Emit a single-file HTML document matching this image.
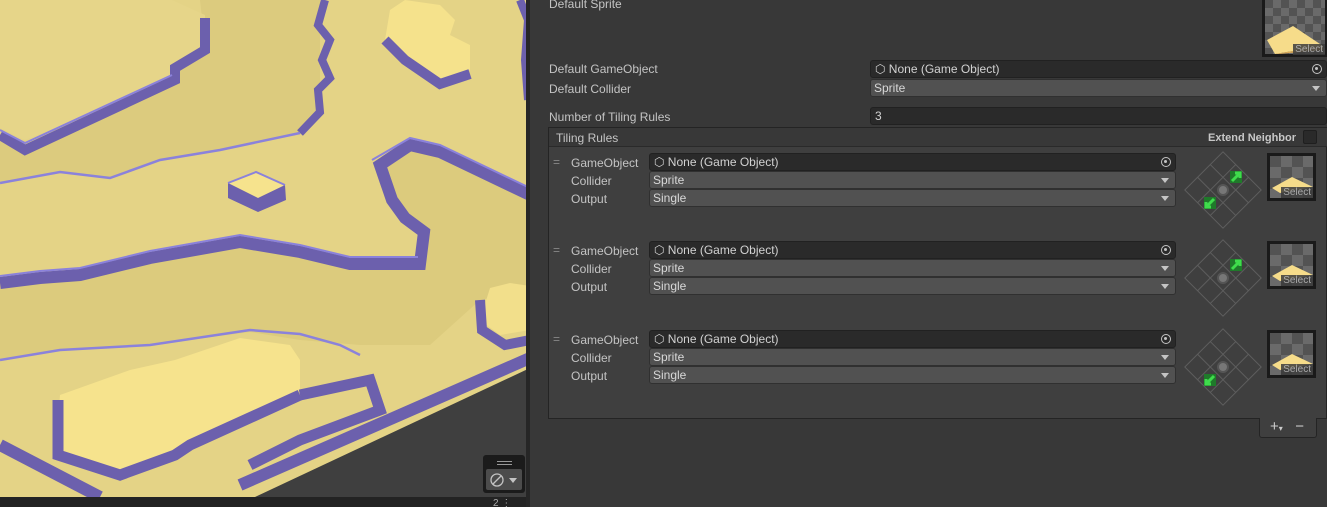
<!DOCTYPE html>
<html><head><meta charset="utf-8"><style>
*{box-sizing:border-box;margin:0;padding:0}
body{width:1327px;height:507px;overflow:hidden;background:#383838;font-family:"Liberation Sans",sans-serif;font-size:12px;color:#c4c4c4;position:relative}
.a{position:absolute}
.lbl{position:absolute;line-height:16px;white-space:nowrap}
.fld{position:absolute;background:#2a2a2a;border:1px solid #212121;border-radius:3px;height:18px;line-height:16px;padding-left:4px;color:#d2d2d2}
.dd{position:absolute;background:#515151;border:1px solid #303030;border-radius:3px;height:18px;line-height:16px;padding-left:3px;color:#d8d8d8}
.dd:after{content:"";position:absolute;right:6px;top:6px;border-left:4px solid transparent;border-right:4px solid transparent;border-top:5px solid #c4c4c4}
.tgt{position:absolute;right:4px;top:3px;width:10px;height:10px;border:1.3px solid #c4c4c4;border-radius:50%}
.tgt:after{content:"";position:absolute;left:2px;top:2px;width:3px;height:3px;background:#c4c4c4;border-radius:50%}
.thumb{position:absolute;background:#1a1a1a;}
.chk{position:absolute;background:
 conic-gradient(#6a6a6a 25%,#535353 0 50%,#6a6a6a 0 75%,#535353 0) 0 0/16px 16px}
.sel{position:absolute;right:0;bottom:0;background:rgba(60,60,60,.85);color:#aaa;font-size:10px;line-height:11px;padding:0 2px}
</style></head><body>
<svg class="a" style="left:0;top:0" width="530" height="507" viewBox="0 0 530 507">
<rect width="530" height="507" fill="#e4d386"/>
<polygon points="0,183 60,172 110,178 160,160 220,150 300,133 320,110 320,0 200,0 205,45 175,62 175,80 25,150 0,140" fill="#dccb7e"/>
<polygon points="0,280 80,270 150,255 240,240 300,250 350,262 420,262 425,230 405,215 390,200 380,160 410,140 440,148 530,190 530,290 480,300 430,345 360,345 300,340 250,332 150,345 60,350 0,360" fill="#dccb7d"/>
<polygon points="0,0 172,0 205,15 205,45 175,62 175,80 25,140 0,128" fill="#e6d589"/>
<polyline points="0,135 25,150 175,80 175,68 205,50 205,18" fill="none" stroke="#6c60ad" stroke-width="10"/>
<polyline points="0,130 25,143 172,75" fill="none" stroke="#8b82db" stroke-width="2"/>
<polyline points="300,133 320,112 318,90 330,78 322,60 330,40 318,25 325,0" fill="none" stroke="#6c60ad" stroke-width="8"/>
<polyline points="0,183 60,172 110,178 160,160 220,150 300,133" fill="none" stroke="#8b82db" stroke-width="2.5"/>
<polygon points="390,10 405,0 440,5 455,20 450,35 470,45 470,70 440,80 405,55 385,40" fill="#f5e28c"/>
<polyline points="385,40 405,60 440,84 470,74" fill="none" stroke="#6c60ad" stroke-width="10"/>
<polyline points="520,0 528,20 525,60 528,100" fill="none" stroke="#6c60ad" stroke-width="8"/>
<polygon points="228,183 256,172 285,185 258,198" fill="#f6e38d"/>
<polygon points="228,183 258,198 285,185 286,200 258,212 228,198" fill="#6c60ad"/>
<polyline points="228,183 256,172 285,185" fill="none" stroke="#8b82db" stroke-width="2"/>
<polyline points="0,283 40,278 80,275 150,258 240,242 300,252 350,264 420,264 424,232 405,218 392,200 380,165 410,145 440,152 530,195" fill="none" stroke="#6c60ad" stroke-width="12"/>
<polyline points="0,276 40,271 80,268 150,251 240,235 300,245 350,257 418,257" fill="none" stroke="#8b82db" stroke-width="2"/>
<polyline points="372,160 410,138 440,145 530,188" fill="none" stroke="#8b82db" stroke-width="2"/>
<polygon points="490,288 510,283 530,286 530,330 500,335 480,320" fill="#f2df8b"/>
<polyline points="480,300 482,330 505,345 530,340" fill="none" stroke="#6c60ad" stroke-width="10"/>
<polyline points="0,360 60,350 150,345 250,330 300,334 340,345 360,355" fill="none" stroke="#8b82db" stroke-width="2.5"/>
<polygon points="60,395 130,370 175,360 240,338 290,345 300,360 300,390 190,440 175,450 120,470 60,455 58,420" fill="#f6e38d"/>
<polyline points="58,400 58,455 120,475 175,455 190,445 300,395" fill="none" stroke="#6c60ad" stroke-width="11"/>
<polyline points="300,395 370,380 380,410 300,440 250,465" fill="none" stroke="#6c60ad" stroke-width="11"/>
<polyline points="0,445 100,497" fill="none" stroke="#6c60ad" stroke-width="12"/>
<polyline points="240,485 530,358" fill="none" stroke="#6c60ad" stroke-width="12"/>
<polygon points="530,368 530,497 255,497" fill="#3f3f3f"/>
<rect x="0" y="497" width="530" height="10" fill="#232323"/>
<rect x="526" y="0" width="4" height="507" fill="#262626"/>
<rect x="483" y="455" width="42" height="38" rx="3" fill="#1b1b1b"/>
<rect x="497" y="461" width="15" height="1" fill="#999"/><rect x="497" y="464" width="15" height="1" fill="#999"/>
<rect x="486" y="469" width="36" height="21" rx="2" fill="#4c4c4c"/>
<circle cx="497" cy="480" r="6" fill="none" stroke="#c4c4c4" stroke-width="1.3"/>
<line x1="493" y1="484" x2="501" y2="476" stroke="#c4c4c4" stroke-width="1.3"/>
<polygon points="509,478 517,478 513,483" fill="#c4c4c4"/>
<text x="493" y="506" fill="#aaa" font-size="10">2 ⋮</text>
</svg>

<div class="lbl" style="left:549px;top:-4px">Default Sprite</div>
<div class="thumb" style="left:1262px;top:0;width:65px;height:57px"><div class="chk" style="left:3px;top:0;width:60px;height:54px"></div>
<svg class="a" style="left:3px;top:20px" width="60" height="34"><polygon points="2,20 28,6 58,26 10,34" fill="#f6dc8a"/><polygon points="10,34 58,26 58,30 14,34" fill="#d8a856"/></svg>
<div class="sel" style="right:2px;bottom:2px">Select</div></div>

<div class="lbl" style="left:549px;top:61px">Default GameObject</div>
<div class="fld" style="left:870px;top:60px;width:457px">⬡ None (Game Object)<div class="tgt"></div></div>
<div class="lbl" style="left:549px;top:81px">Default Collider</div>
<div class="dd" style="left:870px;top:79px;width:457px">Sprite</div>
<div class="lbl" style="left:549px;top:109px">Number of Tiling Rules</div>
<div class="fld" style="left:870px;top:107px;width:457px">3</div>

<div class="a" style="left:548px;top:127px;width:779px;height:292px;border:1px solid #242424;background:#3f3f3f"></div>
<div class="a" style="left:549px;top:128px;width:778px;height:19px;background:#383838;border-bottom:1px solid #2a2a2a"></div>
<div class="lbl" style="left:556px;top:130px">Tiling Rules</div>
<div class="lbl" style="left:1208px;top:130px;font-weight:bold;font-size:11px;color:#c8c8c8">Extend Neighbor</div>
<div class="a" style="left:1303px;top:130px;width:14px;height:14px;background:#2a2a2a;border:1px solid #1f1f1f;border-radius:2px"></div>

<div id="rules"></div>
<div class="a" style="left:1259px;top:418px;width:58px;height:20px;background:#3f3f3f;border:1px solid #242424;border-top:none;border-radius:0 0 3px 3px;font-size:15px;line-height:18px;color:#ccc;padding-left:10px">+<span style="font-size:8px">▾</span>&nbsp;&nbsp;&nbsp;−</div>

<script>
var ys=[153,241,330],arr=[[1,1],[1,0],[0,1]],h='';
ys.forEach(function(y,i){
h+='<div class="lbl" style="left:553px;top:'+(y+1)+'px;color:#888">=</div>';
h+='<div class="lbl" style="left:571px;top:'+(y+2)+'px">GameObject</div>';
h+='<div class="fld" style="left:649px;top:'+y+'px;width:527px">⬡ None (Game Object)<div class="tgt"></div></div>';
h+='<div class="lbl" style="left:571px;top:'+(y+20)+'px">Collider</div>';
h+='<div class="dd" style="left:649px;top:'+(y+18)+'px;width:527px">Sprite</div>';
h+='<div class="lbl" style="left:571px;top:'+(y+38)+'px">Output</div>';
h+='<div class="dd" style="left:649px;top:'+(y+36)+'px;width:527px">Single</div>';
var cx=1223,cy=y+37;
var g='<svg class="a" style="left:'+(cx-40)+'px;top:'+(cy-40)+'px" width="80" height="80"><g transform="translate(40,40) rotate(45)" stroke="#5e5e5e" stroke-width="1" fill="none"><rect x="-27" y="-27" width="54" height="54"/><line x1="-9" y1="-27" x2="-9" y2="27"/><line x1="9" y1="-27" x2="9" y2="27"/><line x1="-27" y1="-9" x2="27" y2="-9"/><line x1="-27" y1="9" x2="27" y2="9"/></g><circle cx="40" cy="40" r="5" fill="#777" stroke="#555" stroke-width="2"/>';
if(arr[i][0])g+='<g transform="translate(53,27)"><rect x="-6" y="-6" width="12" height="12" fill="#1f7a2a"/><path d="M-4 4 L4 -4 M-1 -4 L4 -4 L4 1" stroke="#3fdc4c" stroke-width="3" fill="none"/></g>';
if(arr[i][1])g+='<g transform="translate(27,53)"><rect x="-6" y="-6" width="12" height="12" fill="#1f7a2a"/><path d="M4 -4 L-4 4 M-4 -1 L-4 4 L1 4" stroke="#3fdc4c" stroke-width="3" fill="none"/></g>';
g+='</svg>';h+=g;
h+='<div class="thumb" style="left:1267px;top:'+y+'px;width:49px;height:48px"><div class="chk" style="left:3px;top:3px;width:43px;height:42px;background-size:22px 22px"></div><svg class="a" style="left:3px;top:22px" width="43" height="23"><polygon points="2,13 22,2 43,12 10,18" fill="#f6dc8a"/></svg><div class="sel" style="right:3px;bottom:3px">Select</div></div>';
});
document.getElementById('rules').innerHTML=h;
</script>
</body></html>
